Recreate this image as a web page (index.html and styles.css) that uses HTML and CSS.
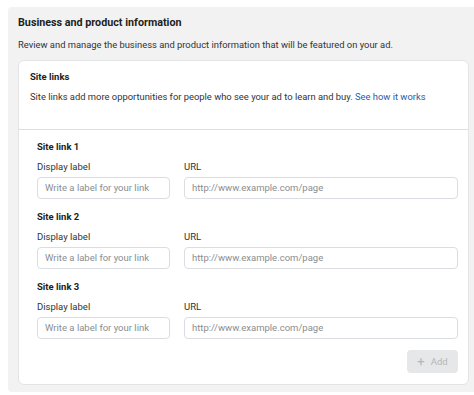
FILE: index.html
```html
<!DOCTYPE html>
<html>
<head>
<meta charset="utf-8">
<link rel="stylesheet" href="styles.css">
</head>
<body>
<div class="panel">
  <h1 class="panel-title">Business and product information</h1>
  <p class="panel-desc">Review and manage the business and product information that will be featured on your ad.</p>
  <div class="card">
    <div class="card-head">
      <h2 class="card-title">Site links</h2>
      <p class="card-desc">Site links add more opportunities for people who see your ad to learn and buy. <a class="link" href="#">See how it works</a></p>
    </div>
    <div class="card-body">
      <div class="group">
        <div class="group-title">Site link 1</div>
        <div class="fields">
          <label class="field"><span class="field-label">Display label</span><span class="input">Write a label for your link</span></label>
          <label class="field"><span class="field-label">URL</span><span class="input">http://www.example.com/page</span></label>
        </div>
      </div>
      <div class="group">
        <div class="group-title">Site link 2</div>
        <div class="fields">
          <label class="field"><span class="field-label">Display label</span><span class="input">Write a label for your link</span></label>
          <label class="field"><span class="field-label">URL</span><span class="input">http://www.example.com/page</span></label>
        </div>
      </div>
      <div class="group">
        <div class="group-title">Site link 3</div>
        <div class="fields">
          <label class="field"><span class="field-label">Display label</span><span class="input">Write a label for your link</span></label>
          <label class="field"><span class="field-label">URL</span><span class="input">http://www.example.com/page</span></label>
        </div>
      </div>
      <div class="actions">
        <button class="add-btn" type="button"><span class="plus">+</span>Add</button>
      </div>
    </div>
  </div>
</div>
</body>
</html>
```
FILE: styles.css
```css
html, body {
  margin: 0;
  padding: 0;
  background: #ffffff;
  overflow: hidden;
}
body {
  font-family: Roboto, "Liberation Sans", Arial, sans-serif;
  color: #1c1e21;
  width: 474px;
  height: 395px;
}
.panel {
  margin: 7px 0 0 8px;
  width: 466px;
  height: 385px;
  box-sizing: border-box;
  background: #f2f2f2;
  border-radius: 4px 0 0 4px;
  padding: 8px 0 0 10px;
}
.panel-title {
  margin: 0;
  font-size: 10.75px;
  line-height: 16px;
  font-weight: 700;
  color: #1c1e21;
}
.panel-desc {
  margin: 7px 0 0;
  font-size: 9.4px;
  line-height: 14px;
  color: #303338;
}
.card {
  margin-top: 8px;
  width: 451px;
  box-sizing: border-box;
  background: #ffffff;
  border: 1px solid #e3e4e6;
  border-radius: 6px;
}
.card-head {
  padding: 9px 11px 0;
  height: 69px;
  box-sizing: border-box;
  border-bottom: 1px solid #dcdee1;
}
.card-title {
  margin: 0;
  font-size: 9.5px;
  line-height: 14px;
  font-weight: 700;
}
.card-desc {
  margin: 6px 0 0;
  font-size: 9.4px;
  line-height: 14px;
  color: #303338;
}
.link {
  color: #2b5aa6;
  text-decoration: none;
}
.card-body {
  padding: 10px 10px 11px 18px;
}
.group {
  margin-bottom: 11px;
}
.group-title {
  font-size: 9.5px;
  line-height: 14px;
  font-weight: 700;
}
.fields {
  display: grid;
  grid-template-columns: 133px 1fr;
  column-gap: 14px;
  margin-top: 6px;
}
.field {
  display: flex;
  flex-direction: column;
}
.field-label {
  font-size: 9.5px;
  line-height: 14px;
  margin-bottom: 3px;
  color: #303338;
}
.input {
  height: 22px;
  box-sizing: border-box;
  border: 1px solid #dadde1;
  border-radius: 4px;
  padding: 0 7px;
  font-size: 9.5px;
  line-height: 20px;
  color: #8a8d91;
  white-space: nowrap;
}
.actions {
  display: flex;
  justify-content: flex-end;
  margin-top: 2px;
}
.add-btn {
  width: 51px;
  height: 23px;
  border: none;
  border-radius: 4px;
  background: #e6e7e9;
  color: #b4b6b9;
  font-family: inherit;
  font-size: 9.5px;
  display: flex;
  align-items: center;
  justify-content: center;
  gap: 6px;
  padding: 0;
}
.plus {
  font-size: 13px;
  line-height: 1;
}
```
